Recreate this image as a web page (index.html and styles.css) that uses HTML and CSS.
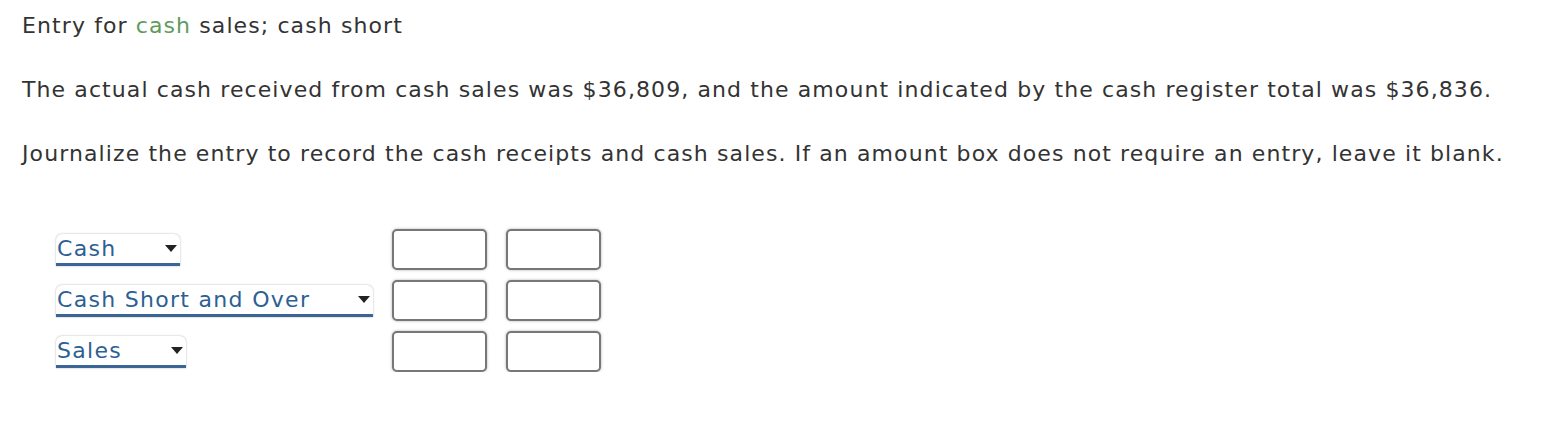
FILE: index.html
```html
<!DOCTYPE html>
<html>
<head>
<meta charset="utf-8">
<link rel="stylesheet" href="styles.css">
</head>
<body>
<div class="page">
  <h1 class="title">Entry for <span class="term">cash</span> sales; cash short</h1>
  <p class="para">The actual cash received from cash sales was $36,809, and the amount indicated by the cash register total was $36,836.</p>
  <p class="para">Journalize the entry to record the cash receipts and cash sales. If an amount box does not require an entry, leave it blank.</p>
  <div class="journal">
    <div class="row">
      <div class="acct"><span class="sel w1"><span class="sel-text">Cash</span><span class="arrow"></span></span></div>
      <div class="box"></div>
      <div class="box"></div>
    </div>
    <div class="row">
      <div class="acct"><span class="sel w2"><span class="sel-text">Cash Short and Over</span><span class="arrow"></span></span></div>
      <div class="box"></div>
      <div class="box"></div>
    </div>
    <div class="row">
      <div class="acct"><span class="sel w3"><span class="sel-text">Sales</span><span class="arrow"></span></span></div>
      <div class="box"></div>
      <div class="box"></div>
    </div>
  </div>
</div>
</body>
</html>
```
FILE: styles.css
```css
html, body {
  margin: 0;
  padding: 0;
  background: #fff;
}
body {
  font-family: Verdana, "DejaVu Sans", sans-serif;
  color: #333;
  font-size: 22px;
  letter-spacing: 1.1px;
}
.page {
  padding: 13px 22px 0 22px;
}
.title {
  font-size: 22px;
  font-weight: normal;
  margin: 0;
  line-height: 26px;
}
.term {
  color: #5e9b5e;
}
.para {
  margin: 38px 0 0 0;
  line-height: 26px;
}
.journal {
  margin-top: 62px;
  display: flex;
  flex-direction: column;
  gap: 10px;
}
.row {
  display: flex;
  align-items: center;
  gap: 19px;
}
.acct {
  width: 351px;
  box-sizing: border-box;
  padding-left: 34px;
  display: flex;
  align-items: center;
}
.sel {
  display: flex;
  align-items: center;
  justify-content: space-between;
  height: 32px;
  background: #fff;
  border-radius: 6px 6px 0 0;
  border-bottom: 3px solid #3a6594;
  box-shadow: 0 0 2px rgba(0,0,0,0.35);
  color: #2d5f93;
  font-size: 22px;
  line-height: 29px;
  box-sizing: border-box;
  padding-left: 1px;
  padding-right: 3px;
  letter-spacing: 1.3px;
}
.sel-text {
  padding-top: 1px;
}
.w1 { width: 124px; }
.w2 { width: 318px; }
.w3 { width: 130px; }
.arrow {
  width: 0;
  height: 0;
  border-left: 6px solid transparent;
  border-right: 6px solid transparent;
  border-top: 7px solid #222;
}
.box {
  width: 95px;
  height: 41px;
  box-sizing: border-box;
  border: 2px solid #777;
  border-radius: 5px;
  box-shadow: 0 0 3px rgba(0,0,0,0.3);
  background: #fff;
}
```
